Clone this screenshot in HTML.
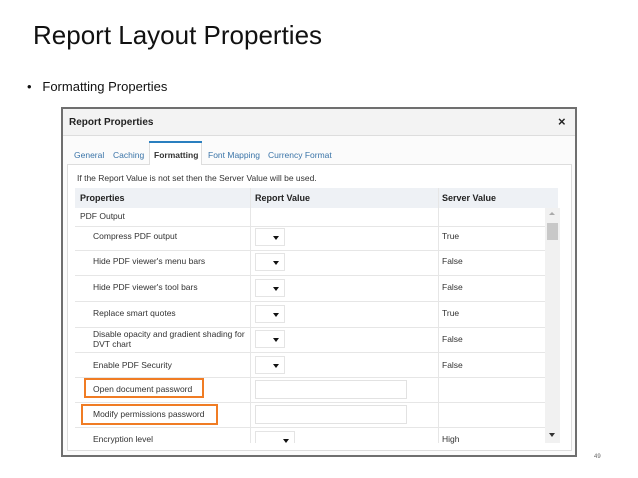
<!DOCTYPE html>
<html><head><style>
body{margin:0;width:638px;height:478px;background:#fff;position:relative;overflow:hidden;font-family:"Liberation Sans",Arial,sans-serif}
.a{position:absolute}
.t{font-size:8.5px;color:#333}
.dd{position:absolute;width:30px;height:18px;background:#fff;border:1px solid #e4e4e4;box-sizing:border-box}
.dd:after{content:"";position:absolute;right:5px;top:7px;border-left:3.5px solid transparent;border-right:3.5px solid transparent;border-top:4px solid #111}
.in{position:absolute;width:152px;height:19px;border:1px solid #e2e2e2;box-sizing:border-box;background:#fff}
.hl{position:absolute;border-top:1px solid #e6e6e6;left:75px;width:470px;height:0}
.tab{position:absolute;top:150px;font-size:8.5px;color:#3a74a8}
</style></head><body>
<div class="a" style="left:33px;top:20px;font-size:26px;color:#111">Report Layout Properties</div>
<div class="a" style="left:27px;top:79px;font-size:13px;color:#111">•&nbsp;&nbsp; Formatting Properties</div>
<div class="a" style="left:61px;top:107px;width:516px;height:350px;border:2px solid #6f6f6f;background:#fbfbfb;box-sizing:border-box"></div>
<div class="a" style="left:63px;top:109px;width:512px;height:26px;background:#f3f3f3;border-bottom:1px solid #ddd"></div>
<div class="a" style="left:69px;top:117px;font-size:10px;font-weight:bold;color:#222">Report Properties</div>
<div class="a" style="left:558px;top:114px;font-size:13px;font-weight:bold;color:#222">×</div>
<div class="a" style="left:67px;top:164px;width:505px;height:287px;background:#fff;border:1px solid #ddd;box-sizing:border-box"></div>
<div class="a" style="left:149px;top:141px;width:53px;height:24px;background:#fff;border:1px solid #ddd;border-bottom:none;box-sizing:border-box"></div>
<div class="a" style="left:149px;top:141px;width:53px;height:2px;background:#2a7fbf"></div>
<div class="tab" style="left:74px">General</div>
<div class="tab" style="left:113px">Caching</div>
<div class="tab" style="left:154px;font-weight:bold;color:#333;font-size:8.5px">Formatting</div>
<div class="tab" style="left:208px">Font Mapping</div>
<div class="tab" style="left:268px">Currency Format</div>
<div class="a t" style="left:77px;top:173px">If the Report Value is not set then the Server Value will be used.</div>
<div class="a" style="left:75px;top:188px;width:483px;height:20px;background:#eef1f5"></div>
<div class="a" style="left:250px;top:188px;height:255px;border-left:1px solid #e6e6e6"></div>
<div class="a" style="left:438px;top:188px;height:255px;border-left:1px solid #e6e6e6"></div>
<div class="a" style="left:80px;top:193px;font-size:9px;font-weight:bold;color:#222">Properties</div>
<div class="a" style="left:255px;top:193px;font-size:9px;font-weight:bold;color:#222">Report Value</div>
<div class="a" style="left:442px;top:193px;font-size:9px;font-weight:bold;color:#222">Server Value</div>
<div class="a" style="left:545px;top:208px;width:15px;height:235px;background:#f1f1f1"></div>
<div class="a" style="left:547px;top:223px;width:11px;height:17px;background:#c8c8c8"></div>
<div class="a" style="left:549px;top:212px;border-left:3px solid transparent;border-right:3px solid transparent;border-bottom:3px solid #aaa"></div>
<div class="a" style="left:549px;top:433px;border-left:3px solid transparent;border-right:3px solid transparent;border-top:4px solid #333"></div>
<div class="hl" style="top:226px"></div><div class="hl" style="top:250px"></div><div class="hl" style="top:275px"></div><div class="hl" style="top:301px"></div><div class="hl" style="top:327px"></div><div class="hl" style="top:352px"></div><div class="hl" style="top:377px"></div><div class="hl" style="top:402px"></div><div class="hl" style="top:427px"></div>
<div class="a t" style="left:80px;top:211px">PDF Output</div>
<div class="a t" style="left:93px;top:231px">Compress PDF output</div><div class="dd" style="left:255px;top:228px"></div><div class="a t" style="left:442px;top:231px">True</div>
<div class="a t" style="left:93px;top:256px">Hide PDF viewer's menu bars</div><div class="dd" style="left:255px;top:253px"></div><div class="a t" style="left:442px;top:256px">False</div>
<div class="a t" style="left:93px;top:282px">Hide PDF viewer's tool bars</div><div class="dd" style="left:255px;top:279px"></div><div class="a t" style="left:442px;top:282px">False</div>
<div class="a t" style="left:93px;top:308px">Replace smart quotes</div><div class="dd" style="left:255px;top:305px"></div><div class="a t" style="left:442px;top:308px">True</div>
<div class="a t" style="left:93px;top:329px;line-height:10px">Disable opacity and gradient shading for<br>DVT chart</div><div class="dd" style="left:255px;top:330px"></div><div class="a t" style="left:442px;top:334px">False</div>
<div class="a t" style="left:93px;top:360px">Enable PDF Security</div><div class="dd" style="left:255px;top:356px"></div><div class="a t" style="left:442px;top:360px">False</div>
<div class="a t" style="left:93px;top:384px">Open document password</div><div class="in" style="left:255px;top:380px"></div>
<div class="a" style="left:84px;top:378px;width:120px;height:20px;border:2px solid #f07c24;box-sizing:border-box"></div>
<div class="a t" style="left:93px;top:409px">Modify permissions password</div><div class="in" style="left:255px;top:405px"></div>
<div class="a" style="left:81px;top:404px;width:137px;height:21px;border:2px solid #f07c24;box-sizing:border-box"></div>
<div class="a t" style="left:93px;top:434px">Encryption level</div><div class="dd" style="left:255px;top:431px;width:40px;height:12px;border-bottom:none"></div><div class="a t" style="left:442px;top:434px">High</div>
<div class="a" style="left:594px;top:454px;font-size:6px;color:#666">49</div>
</body></html>
